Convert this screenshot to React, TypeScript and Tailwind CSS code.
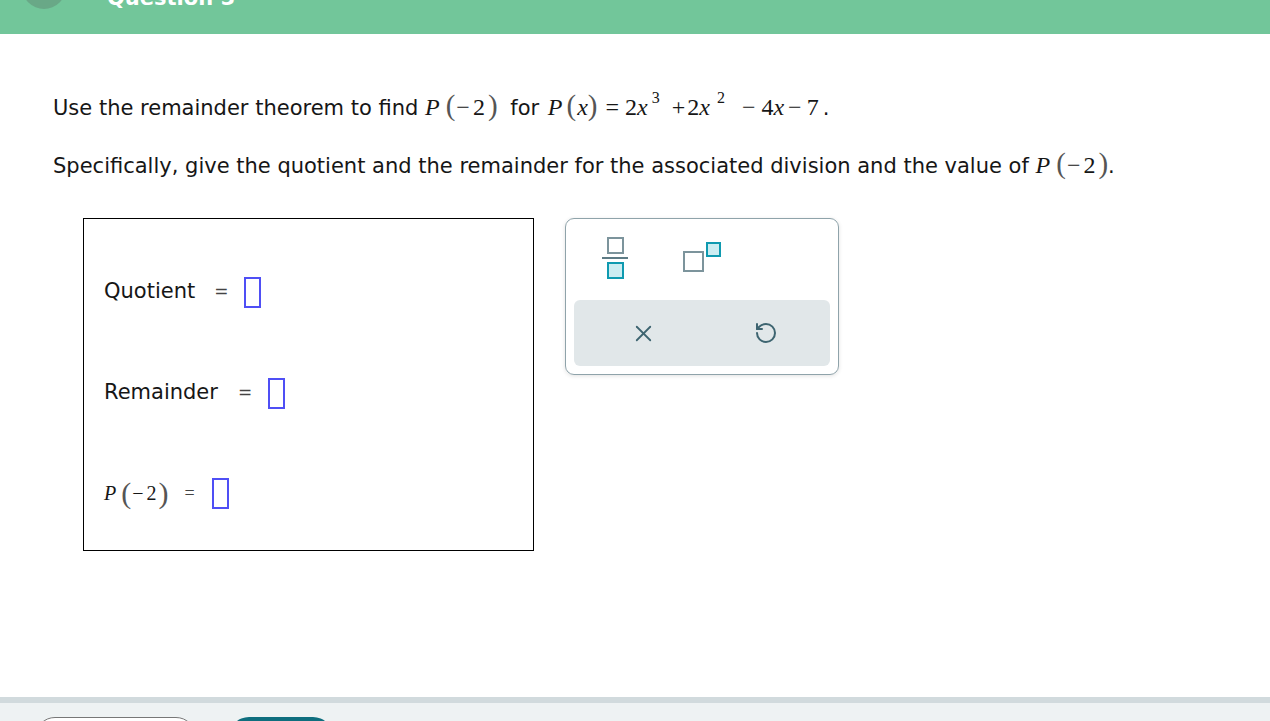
import { X, RotateCcw } from 'lucide-react'

const sans = "font-['DejaVu_Sans','Liberation_Sans',sans-serif]"
const serif = "font-['Liberation_Serif','Times_New_Roman',serif]"

function Paren({ children, size = 'text-[29px]' }: { children: string; size?: string }) {
  return <span className={`${serif} ${size} text-[#555] leading-none`}>{children}</span>
}

function PofArg({ arg }: { arg: 'minus2' | 'x' }) {
  return (
    <span className={`${serif} text-[24px] whitespace-nowrap`}>
      <i className={arg === 'x' ? 'mr-[4px]' : 'mr-[6px]'}>P</i>
      <Paren>(</Paren>
      {arg === 'minus2' ? (
        <span className="ml-[1px] mr-[3px]">
          <span className="mr-[3px]">−</span>2
        </span>
      ) : (
        <i className="ml-[1px]">x</i>
      )}
      <Paren>)</Paren>
    </span>
  )
}

function AnswerSlot() {
  return <span className="inline-block w-[17px] h-[31px] border-2 border-[#4f4ff5] align-middle" />
}

export default function App() {
  return (
    <div className={`${sans} h-[721px] overflow-hidden bg-white flex flex-col text-[#161616]`}>
      {/* header strip */}
      <div className="h-[34px] bg-[#72c69a] overflow-hidden shrink-0">
        <div className="flex items-center gap-[41px] pl-[22px] -mt-[35px]">
          <div className="w-[44px] h-[44px] rounded-full bg-[#69a887]" />
          <span className="relative top-[12px] text-white text-[21px] font-bold">Question 5</span>
        </div>
      </div>

      <div className="flex-1 pl-[53px] pt-[56px]">
        <p className="text-[21px] leading-[34px] flex items-baseline whitespace-nowrap">
          <span>Use the remainder theorem to find&nbsp;</span>
          <PofArg arg="minus2" />
          <span className="ml-[6px] mr-[2px]">&nbsp;for&nbsp;</span>
          <PofArg arg="x" />
          <span className={`${serif} text-[24px] flex items-baseline`}>
            <span className="ml-[8px] mr-[6px]">=</span>
            <span>2</span>
            <i>x</i>
            <span className="text-[16px] relative -top-[12px] ml-[4px]">3</span>
            <span className="ml-[12px] mr-[2px]">+</span>
            <span>2</span>
            <i>x</i>
            <span className="text-[16px] relative -top-[12px] ml-[7px]">2</span>
            <span className="ml-[17px] mr-[6px]">−</span>
            <span>4</span>
            <i>x</i>
            <span className="ml-[4px] mr-[5px]">−</span>
            <span>7</span>
          </span>
          <span className="ml-[4px]">.</span>
        </p>

        <p className="text-[21px] leading-[34px] mt-[21px] flex items-baseline whitespace-nowrap">
          <span>Specifically, give the quotient and the remainder for the associated division and the value of&nbsp;</span>
          <PofArg arg="minus2" />
          <span>.</span>
        </p>

        <div className="flex items-start mt-[35px] ml-[30px]">
          {/* answer box */}
          <div className="w-[451px] h-[333px] border border-black pl-[20px] pt-[57px] flex flex-col">
            <div className="flex items-center h-[32px] text-[21px]">
              <span>Quotient</span>
              <span className="ml-[19px] mr-[16px] text-[#444] text-[17px]">=</span>
              <AnswerSlot />
            </div>
            <div className="flex items-center h-[32px] text-[21px] mt-[69px]">
              <span>Remainder</span>
              <span className="ml-[20px] mr-[16px] text-[#444] text-[17px]">=</span>
              <AnswerSlot />
            </div>
            <div className="flex items-center h-[32px] mt-[68px]">
              <span className={`${serif} text-[20px] flex items-center`}>
                <i className="mr-[5px]">P</i>
                <Paren size="text-[30px]">(</Paren>
                <span className="ml-[1px] mr-[2px]">
                  <span className="mr-[3px]">−</span>2
                </span>
                <Paren size="text-[30px]">)</Paren>
                <span className="ml-[16px] mr-[17px] text-[#444] text-[18px]">=</span>
              </span>
              <AnswerSlot />
            </div>
          </div>

          {/* math palette */}
          <div className="ml-[31px] w-[274px] h-[157px] rounded-[9px] border border-[#8fa3aa] shadow-[0_1px_4px_rgba(0,0,0,0.12)] px-[8px] pt-[18px] flex flex-col">
            <div className="grid grid-cols-3 h-[63px]">
              <div className="flex flex-col items-center pr-[3px]">
                <span className="block w-[17px] h-[17px] border-2 border-[#7c949c] bg-white" />
                <span className="block w-[26px] h-[2px] bg-[#5d7b85] mt-[3px]" />
                <span className="block w-[17px] h-[17px] border-2 border-[#0f9ab0] bg-[#ccedf2] mt-[3px]" />
              </div>
              <div className="flex items-start justify-center pt-[5px]">
                <span className="block w-[21px] h-[21px] border-2 border-[#7c949c] bg-white mt-[9px]" />
                <span className="block w-[15px] h-[15px] border-2 border-[#0f9ab0] bg-[#ccedf2] ml-[2px]" />
              </div>
              <div />
            </div>
            <div className="h-[66px] rounded-[6px] bg-[#e1e7e9] grid grid-cols-2 items-center">
              <div className="flex justify-center pl-[10px]">
                <X size={27} strokeWidth={1.6} color="#3d6470" />
              </div>
              <div className="flex justify-center">
                <RotateCcw size={24} strokeWidth={2} color="#3d6470" />
              </div>
            </div>
          </div>
        </div>
      </div>

      {/* footer */}
      <div className="shrink-0 h-[6px] bg-[#d1dadd]" />
      <div className="shrink-0 h-[18px] bg-[#eef2f3] overflow-hidden flex items-start pl-[35px] pt-[14px] gap-[33px]">
        <div className="w-[161px] h-[40px] rounded-full border border-[#777] bg-white shrink-0" />
        <div className="w-[104px] h-[40px] rounded-full bg-[#0e6e7e] shrink-0" />
      </div>
    </div>
  )
}
